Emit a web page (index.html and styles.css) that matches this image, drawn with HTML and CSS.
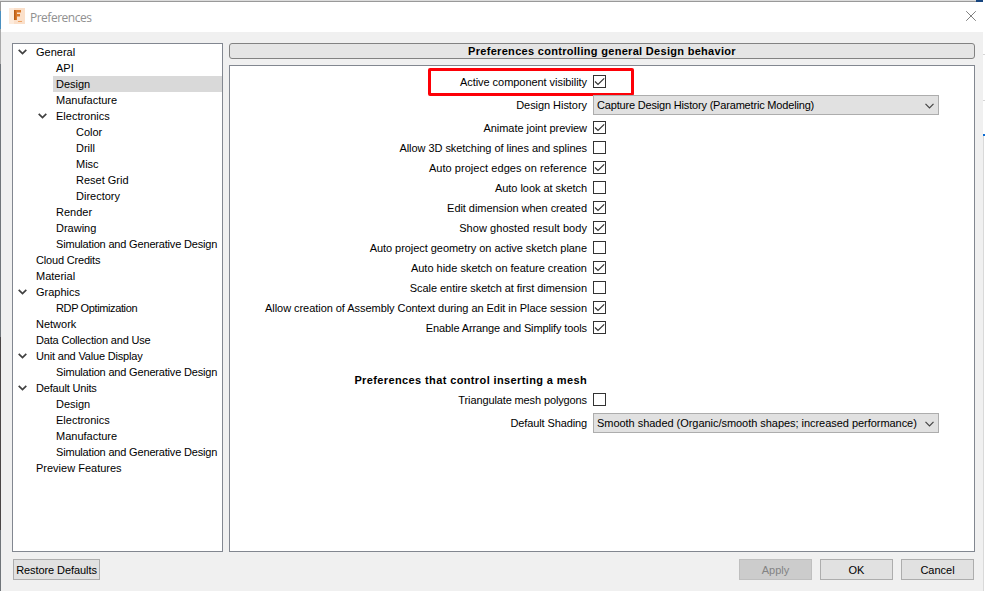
FILE: index.html
```html
<!DOCTYPE html>
<html lang="en">

<head>
    <meta charset="UTF-8" />
    <meta name="viewport" content="width=device-width, initial-scale=1.0" />
    <title>Preferences</title>
    <link rel="stylesheet" href="styles.css">
</head>

<body>
    <!-- Shared icons -->
    <svg class="symbols" width="0" height="0">
        <symbol id="arrow" viewBox="0 0 9 6">
            <path d="M0.7 0.8 L4.5 4.5 L8.3 0.8" fill="none" stroke="#404040" stroke-width="1.7" />
        </symbol>
        <symbol id="chevron" viewBox="0 0 9 6">
            <path d="M0.5 0.8 L4.5 4.8 L8.5 0.8" fill="none" stroke="#444" stroke-width="1.2" />
        </symbol>
        <symbol id="tick" viewBox="0 0 11 11">
            <path d="M1 5.5 L4 8.5 L10.2 2.3" fill="none" stroke="#333" stroke-width="1.2" />
        </symbol>
    </svg>

    <div class="window">
        <header class="titlebar">
            <svg class="logo" width="16" height="16" viewBox="0 0 16 16">
                <rect width="16" height="16" fill="#fbe0ca" />
                <path d="M0 0 H5 V16 H0 Z" fill="#fdebdc" />
                <path d="M5 2 H12 V4.5 H8 V6 H11 V8.5 H8 V12 H5 Z" fill="#d9782a" />
                <path d="M5 2 H6.5 V12 H5 Z" fill="#b95c14" />
                <path d="M9 13.5 H13" stroke="#eda468" />
            </svg>
            <h1>Preferences</h1>
            <svg class="close" width="10" height="10" viewBox="0 0 10 10">
                <path d="M0.2 0.2 L9.8 9.8 M9.8 0.2 L0.2 9.8" stroke="#808080" />
            </svg>
        </header>

        <main>
            <ul class="tree">
                <li><svg class="arrow"><use href="#arrow" /></svg><span>General</span></li>
                <li class="sub"><span>API</span></li>
                <li class="sub selected"><span>Design</span></li>
                <li class="sub"><span>Manufacture</span></li>
                <li class="sub"><svg class="arrow"><use href="#arrow" /></svg><span>Electronics</span></li>
                <li class="subsub"><span>Color</span></li>
                <li class="subsub"><span>Drill</span></li>
                <li class="subsub"><span>Misc</span></li>
                <li class="subsub"><span>Reset Grid</span></li>
                <li class="subsub"><span>Directory</span></li>
                <li class="sub"><span>Render</span></li>
                <li class="sub"><span>Drawing</span></li>
                <li class="sub tight"><span>Simulation and Generative Design</span></li>
                <li class="tight"><span>Cloud Credits</span></li>
                <li><span>Material</span></li>
                <li><svg class="arrow"><use href="#arrow" /></svg><span>Graphics</span></li>
                <li class="sub tighter"><span>RDP Optimization</span></li>
                <li><span>Network</span></li>
                <li class="tight"><span>Data Collection and Use</span></li>
                <li class="tight"><svg class="arrow"><use href="#arrow" /></svg><span>Unit and Value Display</span></li>
                <li class="sub tight"><span>Simulation and Generative Design</span></li>
                <li class="tight"><svg class="arrow"><use href="#arrow" /></svg><span>Default Units</span></li>
                <li class="sub"><span>Design</span></li>
                <li class="sub"><span>Electronics</span></li>
                <li class="sub"><span>Manufacture</span></li>
                <li class="sub tight"><span>Simulation and Generative Design</span></li>
                <li><span>Preview Features</span></li>
            </ul>

            <section class="content">
                <h2>Preferences controlling general Design behavior</h2>
                <div class="panel">
                    <div class="row marked">
                        <label>Active component visibility</label>
                        <span class="check"><svg><use href="#tick" /></svg></span>
                    </div>
                    <div class="row select-row">
                        <label>Design History</label>
                        <div class="select"><span class="tight">Capture Design History (Parametric Modeling)</span><svg><use href="#chevron" /></svg></div>
                    </div>
                    <div class="row">
                        <label>Animate joint preview</label>
                        <span class="check"><svg><use href="#tick" /></svg></span>
                    </div>
                    <div class="row">
                        <label>Allow 3D sketching of lines and splines</label>
                        <span class="check"></span>
                    </div>
                    <div class="row">
                        <label class="wide">Auto project edges on reference</label>
                        <span class="check"><svg><use href="#tick" /></svg></span>
                    </div>
                    <div class="row">
                        <label>Auto look at sketch</label>
                        <span class="check"></span>
                    </div>
                    <div class="row">
                        <label>Edit dimension when created</label>
                        <span class="check"><svg><use href="#tick" /></svg></span>
                    </div>
                    <div class="row">
                        <label class="wide">Show ghosted result body</label>
                        <span class="check"><svg><use href="#tick" /></svg></span>
                    </div>
                    <div class="row">
                        <label>Auto project geometry on active sketch plane</label>
                        <span class="check"></span>
                    </div>
                    <div class="row">
                        <label class="normal">Auto hide sketch on feature creation</label>
                        <span class="check"><svg><use href="#tick" /></svg></span>
                    </div>
                    <div class="row">
                        <label>Scale entire sketch at first dimension</label>
                        <span class="check"></span>
                    </div>
                    <div class="row">
                        <label>Allow creation of Assembly Context during an Edit in Place session</label>
                        <span class="check"><svg><use href="#tick" /></svg></span>
                    </div>
                    <div class="row">
                        <label class="narrow">Enable Arrange and Simplify tools</label>
                        <span class="check"><svg><use href="#tick" /></svg></span>
                    </div>

                    <div class="row group">
                        <h3>Preferences that control inserting a mesh</h3>
                    </div>
                    <div class="row">
                        <label class="narrow">Triangulate mesh polygons</label>
                        <span class="check"></span>
                    </div>
                    <div class="row select-row">
                        <label class="narrow">Default Shading</label>
                        <div class="select"><span class="shading">Smooth shaded (Organic/smooth shapes; increased performance)</span><svg><use href="#chevron" /></svg></div>
                    </div>
                </div>
            </section>
        </main>

        <footer>
            <button class="restore">Restore Defaults</button>
            <button disabled>Apply</button>
            <button>OK</button>
            <button>Cancel</button>
        </footer>
    </div>

    <!-- Edge of the window behind the dialog -->
    <div class="behind">
        <i class="line first"></i>
        <i class="line second"></i>
        <i class="line blue"></i>
        <i class="side"></i>
    </div>
</body>

</html>
```
FILE: styles.css
```css
* {
    margin: 0;
    padding: 0;
    box-sizing: border-box;
}

body {
    display: flex;
    width: 985px;
    height: 591px;
    overflow: hidden;
    font-family: "Liberation Sans", Arial, sans-serif;
    font-size: 11px;
    color: #000;
    background-color: #fff;
}

svg {
    display: block;
}

.symbols {
    position: absolute;
}

.window {
    display: flex;
    flex-direction: column;
    width: 983px;
    height: 591px;
    padding: 2px 0 0 1px;
    background:
        linear-gradient(90deg, transparent 976px, #17457f 976px) 0 0 / 100% 2px no-repeat,
        linear-gradient(#dcdcdc 1px, #999 1px) 0 0 / 100% 2px no-repeat,
        linear-gradient(#999 11px, #4b90c0 11px, #4b90c0 29px, #aaa 29px, #aaa 64px, #70757a 64px, #70757a 337px, #4a4646 337px, #4a4646 530px, #70757a 530px) 0 0 / 1px 100% no-repeat,
        #f0f0f0;
}

/* Title bar */
.titlebar {
    display: flex;
    align-items: center;
    height: 30px;
    padding: 0 7px 0 8px;
    background-color: #fff;
}

.logo {
    margin-top: -2px;
}

.titlebar h1 {
    flex: 1;
    margin-left: 5px;
    font-family: "Open Sans", "Noto Sans", sans-serif;
    font-size: 12px;
    font-weight: normal;
    letter-spacing: -0.5px;
    color: #909090;
}

.close {
    margin-top: -2px;
}

main {
    display: flex;
    gap: 6px;
    height: 509px;
    margin: 11px 8px 0 11px;
}

/* Category tree */
.tree {
    width: 211px;
    border: 1px solid #828790;
    background-color: #fff;
    list-style: none;
}

.tree li {
    display: flex;
    align-items: center;
    height: 16px;
    padding-left: 20px;
    white-space: nowrap;
}

.tree li.sub {
    padding-left: 40px;
}

.tree li.subsub {
    padding-left: 60px;
}

.tree li span {
    flex: 1;
    height: 16px;
    padding-left: 3px;
    line-height: 16px;
}

.tree li.selected span {
    background-color: #d9d9d9;
}

.tight {
    letter-spacing: -0.18px;
}

.tighter {
    letter-spacing: -0.38px;
}

.arrow {
    width: 9px;
    height: 6px;
    margin-left: -15px;
    margin-right: 6px;
}

/* Settings */
.content {
    flex: 1;
    display: flex;
    flex-direction: column;
    gap: 6px;
}

.content h2 {
    height: 16px;
    border: 1px solid #828282;
    border-radius: 3px;
    background-color: #e5e5e5;
    font-size: 11px;
    line-height: 15px;
    letter-spacing: 0.3px;
    text-align: center;
}

.panel {
    flex: 1;
    padding-top: 6px;
    border: 1px solid #828790;
    background-color: #fff;
}

.row {
    display: grid;
    grid-template-columns: 357px 346px;
    column-gap: 6px;
    align-items: center;
    position: relative;
    height: 20px;
    line-height: 20px;
    white-space: nowrap;
}

.row label,
.row h3 {
    justify-self: end;
    font-size: 11px;
}

.row label {
    letter-spacing: -0.05px;
}

.row label.normal {
    letter-spacing: 0;
}

.row label.wide {
    letter-spacing: 0.05px;
}

.row label.narrow {
    letter-spacing: -0.12px;
}

.row h3 {
    letter-spacing: 0.38px;
}

.select-row {
    margin: 3px 0;
}

.group {
    margin-top: 32px;
}

/* Red frame around the highlighted option */
.marked::after {
    content: "";
    box-sizing: border-box;
    position: absolute;
    left: 198px;
    top: -4px;
    width: 206px;
    height: 28px;
    border: 3px solid #fd0007;
    border-radius: 2px;
}

.check {
    width: 13px;
    height: 13px;
    margin-top: -1px;
    border: 1px solid #333;
    background-color: #fff;
}

.check svg {
    width: 11px;
    height: 11px;
}

.select {
    display: flex;
    align-items: center;
    justify-content: space-between;
    height: 20px;
    padding: 0 4px 0 3px;
    border: 1px solid #adadad;
    background-color: #e1e1e1;
    line-height: 18px;
}

.select svg {
    width: 9px;
    height: 6px;
    margin-top: 2px;
}

.shading {
    letter-spacing: -0.04px;
}

/* Buttons */
footer {
    display: flex;
    gap: 8px;
    margin: 7px 9px 0 12px;
}

button {
    width: 73px;
    height: 21px;
    border: 1px solid #adadad;
    background-color: #e1e1e1;
    font-family: inherit;
    font-size: 11px;
    color: #000;
}

button:disabled {
    border-color: #bfbfbf;
    background-color: #ccc;
    color: #838383;
}

.restore {
    width: 87px;
    margin-right: auto;
    letter-spacing: -0.08px;
}

/* Strip to the right of the dialog */
.behind {
    width: 2px;
    background-color: #fff;
}

.line {
    display: block;
    height: 1px;
    background-color: #d5d5d5;
}

.first {
    margin-top: 54px;
}

.second {
    margin-top: 45px;
}

.blue {
    height: 2px;
    margin-top: 33px;
    background-color: #0b6bd3;
}

.side {
    display: block;
    width: 1px;
    height: 455px;
    background-color: #d9d9d9;
}
```
